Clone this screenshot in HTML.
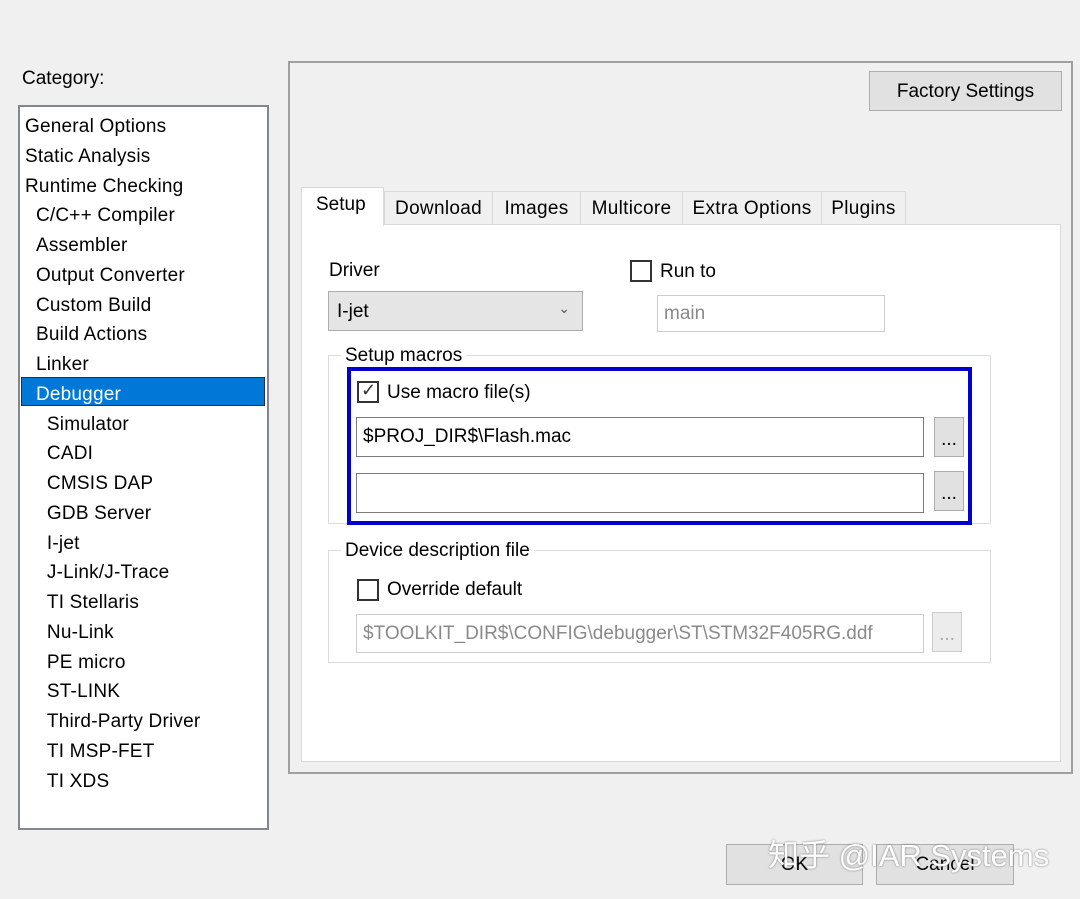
<!DOCTYPE html><html><head><style>
body{margin:0;width:1080px;height:899px;background:#f0f0f0;font-family:"Liberation Sans",Arial,sans-serif;font-size:19px;color:#000;position:relative;overflow:hidden}
.a{position:absolute;white-space:nowrap}
.btn{position:absolute;background:#e1e1e1;border:1px solid #adadad;box-sizing:border-box;text-align:center}
.cb{position:absolute;width:22px;height:22px;border:2px solid #333;box-sizing:border-box;background:#fff}
.in{position:absolute;background:#fff;border:1px solid #7a7a7a;box-sizing:border-box;padding-left:6px}
.grp{position:absolute;border:1px solid #dcdcdc;box-sizing:border-box}
.tab{position:absolute;top:191px;height:34px;border:1px solid #d9d9d9;box-sizing:border-box;text-align:center;padding-top:6px;letter-spacing:0.3px}
</style></head><body>
<div class="a" style="left:22px;top:68px">Category:</div>
<div class="a" style="left:18px;top:105px;width:251px;height:725px;background:#fff;border:2px solid #828790;box-sizing:border-box"></div>
<div class="a" style="left:21px;top:377px;width:244px;height:29px;background:#0078d7;border:1px solid #2a2a5a;box-sizing:border-box"></div>
<div class="a" style="left:25px;top:112px;line-height:29.75px;letter-spacing:0.2px">General Options<br>Static Analysis<br>Runtime Checking<br>&nbsp;&nbsp;C/C++ Compiler<br>&nbsp;&nbsp;Assembler<br>&nbsp;&nbsp;Output Converter<br>&nbsp;&nbsp;Custom Build<br>&nbsp;&nbsp;Build Actions<br>&nbsp;&nbsp;Linker<br><span style="color:#fff">&nbsp;&nbsp;Debugger</span><br>&nbsp;&nbsp;&nbsp;&nbsp;Simulator<br>&nbsp;&nbsp;&nbsp;&nbsp;CADI<br>&nbsp;&nbsp;&nbsp;&nbsp;CMSIS DAP<br>&nbsp;&nbsp;&nbsp;&nbsp;GDB Server<br>&nbsp;&nbsp;&nbsp;&nbsp;I-jet<br>&nbsp;&nbsp;&nbsp;&nbsp;J-Link/J-Trace<br>&nbsp;&nbsp;&nbsp;&nbsp;TI Stellaris<br>&nbsp;&nbsp;&nbsp;&nbsp;Nu-Link<br>&nbsp;&nbsp;&nbsp;&nbsp;PE micro<br>&nbsp;&nbsp;&nbsp;&nbsp;ST-LINK<br>&nbsp;&nbsp;&nbsp;&nbsp;Third-Party Driver<br>&nbsp;&nbsp;&nbsp;&nbsp;TI MSP-FET<br>&nbsp;&nbsp;&nbsp;&nbsp;TI XDS</div>
<div class="a" style="left:288px;top:61px;width:785px;height:713px;border:2px solid #a0a0a0;box-sizing:border-box"></div>
<div class="btn" style="left:869px;top:71px;width:193px;height:40px;line-height:40px">Factory Settings</div>
<div class="a" style="left:301px;top:224px;width:760px;height:538px;background:#fff;border:1px solid #d9d9d9;box-sizing:border-box"></div>
<div class="a" style="left:301px;top:187px;width:83px;height:39px;background:#fff;border:1px solid #d9d9d9;border-bottom:none;box-sizing:border-box;padding:6px 0 0 14px">Setup</div>
<div class="tab" style="left:384px;width:109px">Download</div>
<div class="tab" style="left:492px;width:89px">Images</div>
<div class="tab" style="left:580px;width:103px">Multicore</div>
<div class="tab" style="left:682px;width:140px">Extra Options</div>
<div class="tab" style="left:821px;width:85px">Plugins</div>
<div class="a" style="left:329px;top:260px">Driver</div>
<div class="a" style="left:328px;top:291px;width:255px;height:40px;background:#e5e5e5;border:1px solid #adadad;box-sizing:border-box;padding:9px 0 0 8px">I-jet<span style="position:absolute;right:12px;top:8px;font-size:14px;color:#555">&#8964;</span></div>
<div class="cb" style="left:630px;top:260px"></div><div class="a" style="left:660px;top:261px">Run to</div>
<div class="in" style="left:657px;top:295px;width:228px;height:37px;border-color:#ccc;color:#8a8a8a;line-height:35px">main</div>
<div class="grp" style="left:328px;top:355px;width:663px;height:169px"></div>
<div class="a" style="left:341px;top:345px;background:#fff;padding:0 4px">Setup macros</div>
<div class="a" style="left:347px;top:367px;width:625px;height:158px;border:4px solid #0000d0;box-sizing:border-box"></div>
<div class="cb" style="left:357px;top:381px"><span style="position:absolute;left:2px;top:-3px;font-size:18px;color:#333">✓</span></div>
<div class="a" style="left:387px;top:382px">Use macro file(s)</div>
<div class="in" style="left:356px;top:417px;width:568px;height:40px;line-height:38px">$PROJ_DIR$\Flash.mac</div>
<div class="btn" style="left:934px;top:417px;width:30px;height:40px;line-height:44px">...</div>
<div class="in" style="left:356px;top:473px;width:568px;height:40px"></div>
<div class="btn" style="left:934px;top:471px;width:30px;height:40px;line-height:44px">...</div>
<div class="grp" style="left:328px;top:550px;width:663px;height:113px"></div>
<div class="a" style="left:341px;top:540px;background:#fff;padding:0 4px">Device description file</div>
<div class="cb" style="left:357px;top:579px"></div><div class="a" style="left:387px;top:579px">Override default</div>
<div class="in" style="left:356px;top:614px;width:568px;height:39px;border-color:#ccc;color:#8a8a8a;line-height:37px">$TOOLKIT_DIR$\CONFIG\debugger\ST\STM32F405RG.ddf</div>
<div class="btn" style="left:932px;top:612px;width:30px;height:40px;line-height:44px;color:#aaa;border-color:#ccc;background:#ececec">...</div>
<div class="btn" style="left:726px;top:844px;width:137px;height:41px;line-height:40px">OK</div>
<div class="btn" style="left:876px;top:844px;width:138px;height:41px;line-height:40px">Cancel</div>
<div class="a" style="left:768px;top:830px;font-size:31px;color:#fff;text-shadow:0 0 2px #777;font-family:'Liberation Sans','Noto Sans CJK SC',sans-serif">知乎 @IAR Systems</div>
</body></html>
